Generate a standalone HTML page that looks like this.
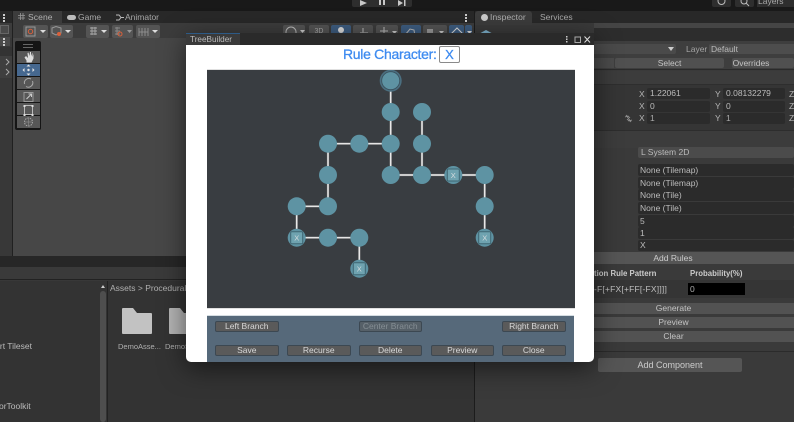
<!DOCTYPE html>
<html><head><meta charset="utf-8">
<style>
html,body{margin:0;padding:0;background:#2f2f2f}
#r{position:relative;width:794px;height:422px;overflow:hidden;background:#383838;font-family:"Liberation Sans",sans-serif;font-size:8.5px;color:#bbb;filter:blur(.3px)}
#r div{position:absolute;box-sizing:border-box;white-space:nowrap}
.b{background:#505050;border-radius:2px}
.f{background:#2b2b2b;border-radius:2px;height:11px;line-height:11px;padding-left:3px;color:#bcbcbc}
.t{text-align:center}
.wb{background:#5a5a5a;border:1px solid #3c4852;border-radius:2px;height:11px;line-height:9px;width:63.5px;text-align:center;color:#d8d8d8;font-size:8.5px}
.ib{background:#545454;border-radius:2px;height:13px;top:25px}
</style></head><body>
<div id="r">
<!-- top bar -->
<div style="left:0;top:0;width:794px;height:11px;background:#191919"></div>
<div style="left:352px;top:0;width:60px;height:7px;background:#2e2e2e;border-radius:0 0 2px 2px"></div>
<svg style="position:absolute;left:352px;top:0" width="60" height="7"><path d="M8 0l7 3-7 3z M27 0h2v5h-2z M31 0h2v5h-2z M46 0l5 3-5 3z M52 0h1.500v6h-1.500z" fill="#c8c8c8"/></svg>
<div style="left:712px;top:0;width:19px;height:7px;background:#2e2e2e;border-radius:0 0 2px 2px"></div>
<div style="left:735px;top:0;width:19px;height:7px;background:#2e2e2e;border-radius:0 0 2px 2px"></div>
<div style="left:757px;top:0;width:37px;height:7px;background:#2e2e2e;padding-left:1px;line-height:3px;color:#aaa;font-size:8.500px">Layers</div>
<svg style="position:absolute;left:712px;top:0" width="40" height="7"><circle cx="9.500" cy="1" r="3.500" fill="none" stroke="#bbb"/><circle cx="32" cy="1" r="3" fill="none" stroke="#bbb"/><path d="M34 3l3 3" stroke="#bbb"/></svg>
<!-- tab strip -->
<div style="left:0;top:11px;width:794px;height:12px;background:#282828"></div>
<div style="left:0;top:23px;width:474px;height:15px;background:#3c3c3c"></div>
<div style="left:13px;top:38px;width:461px;height:218px;background:#474747"></div>
<div style="left:0;top:38px;width:13px;height:218px;background:#383838"></div>
<div style="left:12px;top:11px;width:1px;height:245px;background:#202020"></div>
<div style="left:13px;top:11px;width:49px;height:12px;background:#3c3c3c"></div>
<div style="left:28px;top:11px;line-height:13px;color:#b0b0b0;font-size:8.500px;letter-spacing:.1px">Scene</div>
<svg style="position:absolute;left:18px;top:13px" width="8" height="8"><path d="M0 2.500h7M0 5h7M2.500 0v7M5 0v7" stroke="#999" stroke-width=".8"/></svg>
<div style="left:67px;top:15px;width:9px;height:5px;background:#bbb;border-radius:3px"></div>
<div style="left:78px;top:11px;line-height:13px;color:#a8a8a8;font-size:8.500px">Game</div>
<svg style="position:absolute;left:116px;top:14px" width="9" height="7"><path d="M0 1h3l2 2.500h3M0 6h3l2-2.500" stroke="#bbb" fill="none"/></svg>
<div style="left:125px;top:11px;line-height:13px;color:#a8a8a8;font-size:8.500px">Animator</div>
<svg style="position:absolute;left:3px;top:14px" width="3" height="8"><path d="M0 0h2v2H0zM0 3h2v2H0zM0 6h2v2H0z" fill="#ccc"/></svg>
<svg style="position:absolute;left:465px;top:14px" width="3" height="8"><path d="M0 0h2v2H0zM0 3h2v2H0zM0 6h2v2H0z" fill="#ccc"/></svg>
<!-- left edge -->
<div style="left:0;top:25px;width:9px;height:9px;background:#4a4a4a;border:1px solid #666"></div>
<div style="left:0;top:37px;width:10px;height:9px;background:#4a4a4a"></div>
<svg style="position:absolute;left:3px;top:38px" width="3" height="8"><path d="M0 0h2v2H0zM0 3h2v2H0zM0 6h2v2H0z" fill="#ccc"/></svg>
<div style="left:0;top:47px;width:12px;height:9px;background:#333"></div>
<div style="left:0;top:56px;width:12px;height:22px;background:#3f3f3f"></div>
<svg style="position:absolute;left:0;top:57px" width="12" height="20"><path d="M6 2l3 3-3 3M6 12l3 3-3 3" fill="none" stroke="#aaa"/></svg>
<!-- scene toolbar -->
<div class="ib" style="left:23px;width:25px"></div><div class="ib" style="left:50px;width:23px"></div>
<div class="ib" style="left:86px;width:23px"></div><div class="ib" style="left:112px;width:21px"></div><div class="ib" style="left:136px;width:24px"></div>
<svg style="position:absolute;left:23px;top:25px" width="140" height="13"><rect x="3" y="2" width="9" height="9" fill="none" stroke="#999"/><circle cx="7.500" cy="6.500" r="2.200" fill="none" stroke="#d9603b"/><path d="M17 5h6l-3 3z" fill="#ddd"/><path d="M29 3l4-1.500 5 1.500v5l-5 2-4-2z" fill="none" stroke="#999"/><circle cx="36" cy="9" r="2" fill="#d9603b"/><path d="M42 5h6l-3 3z" fill="#ddd"/><path d="M67 3h7M67 6h7M67 9h7M69 2v8M72 2v8" stroke="#aaa" stroke-width=".9"/><path d="M78 5h6l-3 3z" fill="#ddd"/><path d="M92 3h5M92 6h5M92 9h5M94 2v8" stroke="#888"/><circle cx="97" cy="9" r="2" fill="none" stroke="#d9603b"/><path d="M104 5h5l-2.500 3z" fill="#999"/><path d="M116 3v8M119 3v8M122 3v8M125 3v8M116 7h9" stroke="#999" stroke-width=".8"/><path d="M129 5h6l-3 3z" fill="#ddd"/></svg>
<div class="ib" style="left:283px;width:22px"></div><div class="ib" style="left:309px;width:20px;text-align:center;line-height:14px;color:#aaa;font-size:7px">3D</div>
<div class="ib" style="left:331px;width:20px;background:#3e5d80"></div><div class="ib" style="left:353px;width:20px"></div><div class="ib" style="left:376px;width:22px"></div><div class="ib" style="left:401px;width:20px;background:#3e5d80"></div><div class="ib" style="left:423px;width:24px"></div>
<div class="ib" style="left:449px;width:15px;background:#3e5d80"></div><div class="ib" style="left:465px;width:7px;background:#3e5d80"></div>
<svg style="position:absolute;left:283px;top:25px" width="191" height="13"><path d="M3 12V7a5 5 0 0 1 10 0v5" fill="none" stroke="#bbb"/><path d="M17 5h5l-2.500 3z" fill="#ccc"/><circle cx="58" cy="5" r="3" fill="#ddd"/><path d="M77 8h8M80 8V3" stroke="#999" stroke-width="1.500"/><path d="M97 6h8M101 2v8" stroke="#bbb"/><path d="M109 6h5l-2.500 3z" fill="#ccc"/><path d="M122 10l5-6 4 1 1 6z" fill="none" stroke="#bbb"/><path d="M144 4h6v6h-6z" fill="#999"/><path d="M156 6h5l-2.500 3z" fill="#ccc"/><path d="M168 9l6-6 6 6M168 9h12" fill="none" stroke="#ddd"/><path d="M184 6h5l-2.500 3z" fill="#ddd"/></svg>
<!-- toolbox -->
<div style="left:15px;top:41px;width:26px;height:89px;background:#151515;border-radius:2px"></div>
<div style="left:23px;top:44px;width:10px;height:1px;background:#666"></div><div style="left:23px;top:47px;width:10px;height:1px;background:#666"></div>
<div style="left:17px;top:51px;width:23px;height:12px;background:#575757"></div>
<div style="left:17px;top:64px;width:23px;height:12px;background:#46688f"></div>
<div style="left:17px;top:77px;width:23px;height:12px;background:#575757"></div>
<div style="left:17px;top:90px;width:23px;height:12px;background:#575757"></div>
<div style="left:17px;top:103px;width:23px;height:12px;background:#575757"></div>
<div style="left:17px;top:116px;width:23px;height:12px;background:#575757"></div>
<svg style="position:absolute;left:17px;top:51px" width="23" height="77"><path d="M7.500 6.500l2 3v2h5l2-4V3l-1 3V1.500L14 5V1h-1l-.5 4-1-3.500-1 .5.500 5-2-2z" fill="#ddd"/><path d="M11.500 13.500l2 2h-4zM11.500 24.500l2-2h-4zM5.500 19l2-2v4zM17.500 19l-2-2v4z" fill="#e6e6e6"/><circle cx="11.500" cy="19" r="1.200" fill="#e6e6e6"/><path d="M7.500 33a4.500 4.500 0 0 1 6.500-5M15.500 30a4.500 4.500 0 0 1-6.500 5.500" fill="none" stroke="#aaa"/><rect x="7" y="41.500" width="9" height="9" fill="none" stroke="#999"/><path d="M9.500 48l5-5M11.500 43h3v3" fill="none" stroke="#ccc"/><rect x="7.500" y="54.500" width="8" height="9" fill="none" stroke="#bbb"/><path d="M6.500 54h2v2h-2zM14.500 54h2v2h-2zM6.500 63h2v2h-2zM14.500 63h2v2h-2z" fill="#ddd"/><circle cx="11.500" cy="71" r="4" fill="none" stroke="#aaa" stroke-dasharray="1.500 1"/><path d="M7.500 71h8M11.500 67v8" stroke="#888" stroke-width=".7"/></svg>
<!-- bottom pane -->
<div style="left:0;top:256px;width:474px;height:11px;background:#272727"></div>
<div style="left:0;top:267px;width:474px;height:13px;background:#3a3a3a;border-bottom:1px solid #222"></div>
<div style="left:0;top:281px;width:474px;height:141px;background:#333"></div>
<div style="left:107px;top:281px;width:1px;height:141px;background:#222"></div>
<div style="left:100px;top:291px;width:6px;height:131px;background:#4e4e4e;border-radius:3px"></div>
<svg style="position:absolute;left:101px;top:285px" width="5" height="4"><path d="M0 3h4L2 0z" fill="#ccc"/></svg>
<div style="left:110px;top:282px;line-height:12px;color:#b0b0b0;font-size:8.500px">Assets &gt; Procedural</div>
<div style="left:-8px;top:340px;line-height:12px;color:#bbb;font-size:8.500px;width:40px;text-align:right">rt Tileset</div>
<div style="left:-1px;top:400px;line-height:12px;color:#bbb;font-size:8.500px;width:31px;text-align:right">orToolkit</div>
<svg style="position:absolute;left:121px;top:307px" width="70" height="28"><path d="M1 2a1 1 0 0 1 1-1h10l4 5h14a1 1 0 0 1 1 1v19a1 1 0 0 1-1 1H2a1 1 0 0 1-1-1z" fill="#c2c2c2"/><path d="M48 2a1 1 0 0 1 1-1h10l4 5h7v21H49a1 1 0 0 1-1-1z" fill="#b5b5b5"/></svg>
<div style="left:118px;top:341px;line-height:12px;font-size:7.500px;color:#b0b0b0">DemoAsse...</div>
<div style="left:165px;top:341px;line-height:12px;font-size:7.500px;color:#b0b0b0">DemoS</div>
<!-- inspector -->
<div style="left:474px;top:11px;width:1px;height:411px;background:#1c1c1c"></div>
<div style="left:475px;top:23px;width:319px;height:399px;background:#3a3a3a"></div>
<div style="left:475px;top:11px;width:57px;height:14px;background:#3c3c3c;border-radius:3px 3px 0 0"></div>
<div style="left:481px;top:14px;width:7px;height:7px;background:#ccc;border-radius:50%"></div>
<div style="left:490px;top:11px;line-height:13px;color:#b0b0b0;font-size:8.500px;letter-spacing:.1px">Inspector</div>
<div style="left:540px;top:11px;line-height:13px;color:#aaa;font-size:8.500px">Services</div>
<div style="left:594px;top:23px;width:200px;height:5px;background:#454545"></div>
<div style="left:594px;top:28px;width:200px;height:13px;background:#2d2d2d"></div>
<div style="left:480px;top:30px;width:12px;height:8px;background:#7fb4d0;clip-path:polygon(50% 0,100% 40%,100% 100%,0 100%,0 40%)"></div>
<div style="left:594px;top:41px;width:200px;height:29px;background:#3e3e3e;border-bottom:1px solid #2a2a2a"></div>
<div style="left:594px;top:44px;width:82px;height:10px;background:#4a4a4a;border-radius:0 2px 2px 0"></div>
<svg style="position:absolute;left:668px;top:47px" width="6" height="4"><path d="M0 0h6L3 4z" fill="#ccc"/></svg>
<div style="left:686px;top:43px;line-height:12px;color:#a5a5a5">Layer</div>
<div style="left:709px;top:44px;width:85px;height:10px;background:#4d4d4d;line-height:10px;padding-left:2px;color:#bbb;border-radius:2px 0 0 2px">Default</div>
<div class="b t" style="left:594px;top:58px;width:20px;height:10px;background:#4b4b4b;border-radius:0"></div>
<div class="b t" style="left:615px;top:58px;width:109px;height:10px;line-height:10px;color:#c4c4c4">Select</div>
<div class="b t" style="left:732px;top:58px;width:62px;height:10px;line-height:10px;color:#c4c4c4;padding-right:24px">Overrides</div>
<div style="left:594px;top:71px;width:200px;height:14px;background:#3c3c3c;border-bottom:1px solid #2e2e2e"></div>
<div style="left:594px;top:85px;width:200px;height:45px;background:#353535"></div>
<div style="left:639px;top:88px;line-height:12px;color:#b5b5b5">X</div><div style="left:715px;top:88px;line-height:12px;color:#b5b5b5">Y</div><div style="left:789px;top:88px;line-height:12px;color:#b5b5b5">Z</div>
<div class="f" style="left:647px;top:88px;width:63px">1.22061</div><div class="f" style="left:723px;top:88px;width:62px">0.08132279</div>
<div style="left:639px;top:100px;line-height:12px;color:#b5b5b5">X</div><div style="left:715px;top:100px;line-height:12px;color:#b5b5b5">Y</div><div style="left:789px;top:100px;line-height:12px;color:#b5b5b5">Z</div>
<div class="f" style="left:647px;top:100.500px;width:63px">0</div><div class="f" style="left:723px;top:100.500px;width:62px">0</div>
<div style="left:639px;top:112px;line-height:12px;color:#b5b5b5">X</div><div style="left:715px;top:112px;line-height:12px;color:#b5b5b5">Y</div><div style="left:789px;top:112px;line-height:12px;color:#b5b5b5">Z</div>
<div class="f" style="left:647px;top:113px;width:63px;color:#aaa">1</div><div class="f" style="left:723px;top:113px;width:62px;color:#aaa">1</div>
<svg style="position:absolute;left:624px;top:114px" width="9" height="9"><path d="M1 3l3-1 2 2M8 6L5 7 3 5M2 1l5 7" stroke="#999" fill="none" stroke-width=".8"/></svg>
<div style="left:594px;top:130px;width:200px;height:18px;background:#3c3c3c;border-top:1px solid #2d2d2d"></div>
<div class="f" style="left:638px;top:147px;width:156px;background:#4b4b4b;line-height:11px">L System 2D</div>
<div class="f" style="left:638px;top:164px;width:156px;height:12px;line-height:12px;padding-left:2px">None (Tilemap)</div>
<div class="f" style="left:638px;top:177px;width:156px;height:12px;line-height:12px;padding-left:2px">None (Tilemap)</div>
<div class="f" style="left:638px;top:189px;width:156px;height:12px;line-height:12px;padding-left:2px">None (Tile)</div>
<div class="f" style="left:638px;top:202px;width:156px;height:12px;line-height:12px;padding-left:2px">None (Tile)</div>
<div class="f" style="left:638px;top:215px;width:156px;height:12px;line-height:12px;padding-left:2px">5</div>
<div class="f" style="left:638px;top:227px;width:156px;height:12px;line-height:12px;padding-left:2px">1</div>
<div class="f" style="left:638px;top:240px;width:156px;height:11px;line-height:11px;padding-left:2px">X</div>
<div class="b t" style="left:594px;top:252px;width:200px;height:12px;line-height:12px;color:#ccc;background:#555;padding-right:42px;border-radius:0">Add Rules</div>
<div style="left:594px;top:267px;line-height:13px;color:#ccc;font-weight:bold;font-size:7.800px">tion Rule Pattern</div>
<div style="left:690px;top:267px;line-height:13px;color:#ccc;font-weight:bold;font-size:7.800px">Probability(%)</div>
<div style="left:594px;top:280px;width:200px;height:18px;background:#353535"></div>
<div style="left:594px;top:283px;line-height:13px;color:#c0c0c0;font-size:8.500px;letter-spacing:.2px">-F[+FX[+FF[-FX]]]]</div>
<div style="left:688px;top:283px;width:57px;height:12px;background:#000;line-height:12px;padding-left:2px;color:#aaa">0</div>
<div class="b t" style="left:594px;top:303px;width:200px;height:11px;line-height:11px;color:#c4c4c4;background:#525252;padding-right:41px;border-radius:0">Generate</div>
<div class="b t" style="left:594px;top:317px;width:200px;height:11px;line-height:11px;color:#c4c4c4;background:#525252;padding-right:41px;border-radius:0">Preview</div>
<div class="b t" style="left:594px;top:331px;width:200px;height:11px;line-height:11px;color:#c4c4c4;background:#525252;padding-right:41px;border-radius:0">Clear</div>
<div style="left:594px;top:351px;width:200px;height:1px;background:#2b2b2b"></div>
<div class="b t" style="left:598px;top:358px;width:144px;height:14px;line-height:14px;color:#ccc;background:#555;font-size:9px">Add Component</div>
<!-- modal window -->
<div style="left:186px;top:33px;width:408px;height:329px;border-radius:3px 3px 5px 5px;box-shadow:0 6px 26px rgba(0,0,0,.55)"></div>
<div style="left:186px;top:33px;width:408px;height:12px;background:#2a2a2a"></div>
<div style="left:186px;top:33px;width:54px;height:12px;background:#3a3a3a;border-top:1px solid #2d5a86;line-height:11px;padding-left:4px;color:#bdbdbd;font-size:8.200px">TreeBuilder</div>
<svg style="position:absolute;left:562px;top:35px" width="30" height="9"><path d="M4 1h1.500v1.500H4zM4 3.500h1.500V5H4zM4 6h1.500v1.500H4z" fill="#ccc"/><rect x="13" y="2" width="5.500" height="5.500" fill="none" stroke="#aaa"/><path d="M22.500 1.500l5.500 6M28 1.500l-5.500 6" stroke="#ddd"/></svg>
<div style="left:186px;top:45px;width:408px;height:317px;background:#fff;border-radius:0 0 5px 5px"></div>
<div style="left:343px;top:45px;height:20px;line-height:19px;color:#3e8bf0;font-size:14px;letter-spacing:-.3px;-webkit-text-stroke:.3px #3e8bf0">Rule Character:</div>
<div style="left:439px;top:46px;width:21px;height:17px;border:1.300px solid #8a8a8a;border-radius:2px;text-align:center;line-height:15px;color:#3e8bf0;font-size:13px;background:#fff;-webkit-text-stroke:.3px #3e8bf0">X</div>
<div style="left:207px;top:69px;width:368px;height:240px;background:#393d41;border:1px solid #e0e0e0;border-width:1px 0"></div>
<div style="left:207px;top:315px;width:367px;height:47px;background:#56697a;border-top:1px solid #d5dde2"></div>
<div class="wb" style="left:215px;top:321px">Left Branch</div>
<div class="wb" style="left:358.500px;top:321px;background:#566068;color:#858e94">Center Branch</div>
<div class="wb" style="left:502px;top:321px">Right Branch</div>
<div class="wb" style="left:215px;top:345px">Save</div>
<div class="wb" style="left:287px;top:345px">Recurse</div>
<div class="wb" style="left:358.500px;top:345px">Delete</div>
<div class="wb" style="left:430.500px;top:345px">Preview</div>
<div class="wb" style="left:502px;top:345px">Close</div>
<!-- tree -->
<svg style="position:absolute;left:207px;top:70px" width="368" height="238" viewBox="207 70 368 238">
<g stroke="#8d8d8d" stroke-width="2.200" fill="none">
<path d="M390.700 80.700V175M422 112V175M328 143.700H390.700M328 143.700V206.300M390.700 175H484.700M484.700 175V237.700M296.700 206.300H328M296.700 206.300V237.700M296.700 237.700H359.300M359.300 237.700V268.700"/>
</g>
<g stroke="#f2f2f2" stroke-width="1.200" fill="none">
<path d="M390.700 80.700V175M422 112V175M328 143.700H390.700M328 143.700V206.300M390.700 175H484.700M484.700 175V237.700M296.700 206.300H328M296.700 206.300V237.700M296.700 237.700H359.300M359.300 237.700V268.700"/>
</g>
<g fill="#5e93a3">
<circle cx="390.700" cy="80.700" r="11" fill="#4b6f80"/><circle cx="390.700" cy="80.700" r="9" stroke="#39505c" stroke-width=".8"/>
<circle cx="390.700" cy="112" r="9"/><circle cx="422" cy="112" r="9"/>
<circle cx="328" cy="143.700" r="9"/><circle cx="359.300" cy="143.700" r="9"/><circle cx="390.700" cy="143.700" r="9"/><circle cx="422" cy="143.700" r="9"/>
<circle cx="328" cy="175" r="9"/><circle cx="390.700" cy="175" r="9"/><circle cx="422" cy="175" r="9"/><circle cx="453.300" cy="175" r="9"/><circle cx="484.700" cy="175" r="9"/>
<circle cx="296.700" cy="206.300" r="9"/><circle cx="328" cy="206.300" r="9"/><circle cx="484.700" cy="206.300" r="9"/>
<circle cx="296.700" cy="237.700" r="9"/><circle cx="328" cy="237.700" r="9"/><circle cx="359.300" cy="237.700" r="9"/><circle cx="484.700" cy="237.700" r="9"/>
<circle cx="359.300" cy="268.700" r="9"/>
</g>
<g fill="#6fa3b0" stroke="#3f6672" stroke-width="1">
<rect x="447.300" y="169" width="12" height="12" rx="1"/><rect x="290.700" y="231.700" width="12" height="12" rx="1"/><rect x="478.700" y="231.700" width="12" height="12" rx="1"/><rect x="353.300" y="262.700" width="12" height="12" rx="1"/>
</g>
<g fill="#d5dcde" font-family="Liberation Sans, sans-serif" font-size="7.500" text-anchor="middle">
<text x="453.300" y="177.800">X</text><text x="296.700" y="240.500">X</text><text x="484.700" y="240.500">X</text><text x="359.300" y="271.500">X</text>
</g>
</svg>
</div>
</body></html>
